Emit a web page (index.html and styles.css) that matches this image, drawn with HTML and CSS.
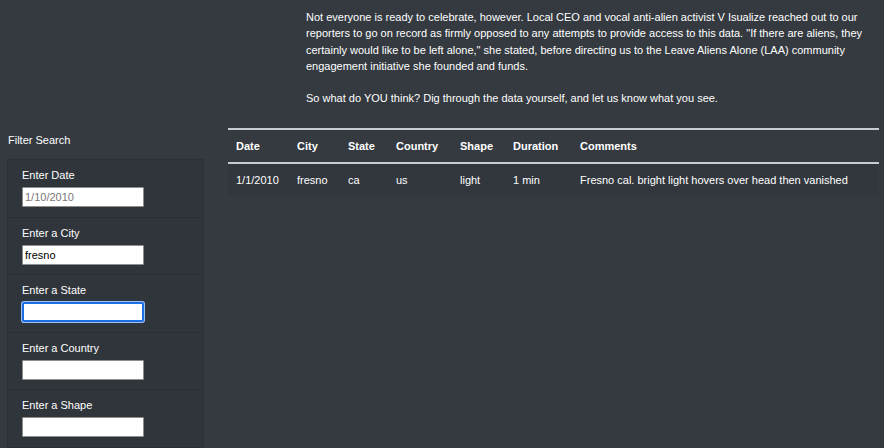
FILE: index.html
```html
<!DOCTYPE html>
<html>
<head>
<meta charset="utf-8">
<link rel="stylesheet" href="styles.css">
</head>
<body>
<div class="intro">
  <p>Not everyone is ready to celebrate, however. Local CEO and vocal anti-alien activist V Isualize reached out to our reporters to go on record as firmly opposed to any attempts to provide access to this data. "If there are aliens, they certainly would like to be left alone," she stated, before directing us to the Leave Aliens Alone (LAA) community engagement initiative she founded and funds.</p>
  <p>So what do YOU think? Dig through the data yourself, and let us know what you see.</p>
</div>
<div class="main">
  <aside class="filters">
    <div class="filter-title">Filter Search</div>
    <ul class="filter-list">
      <li><label>Enter Date</label><input class="inp" type="text" placeholder="1/10/2010"></li>
      <li><label>Enter a City</label><input class="inp" type="text" value="fresno"></li>
      <li><label>Enter a State</label><input class="inp focus" type="text"></li>
      <li><label>Enter a Country</label><input class="inp" type="text"></li>
      <li><label>Enter a Shape</label><input class="inp" type="text"></li>
    </ul>
  </aside>
  <section class="results">
    <table class="ufo">
      <thead>
        <tr><th class="c-date">Date</th><th class="c-city">City</th><th class="c-state">State</th><th class="c-country">Country</th><th class="c-shape">Shape</th><th class="c-dur">Duration</th><th>Comments</th></tr>
      </thead>
      <tbody>
        <tr><td>1/1/2010</td><td>fresno</td><td>ca</td><td>us</td><td>light</td><td>1 min</td><td>Fresno cal. bright light hovers over head then vanished</td></tr>
      </tbody>
    </table>
  </section>
</div>
</body>
</html>
```
FILE: styles.css
```css
* { box-sizing: border-box; }
html, body { margin: 0; padding: 0; }
body {
  width: 884px;
  height: 448px;
  overflow: hidden;
  background: #343a40;
  color: #fff;
  font-family: "Liberation Sans", Arial, sans-serif;
  font-size: 11px;
}
.intro {
  padding: 9px 8px 0 306px;
}
.intro p {
  margin: 0 0 16px 0;
  line-height: 16.25px;
}
.main {
  display: flex;
  margin-top: 1px;
}
.filters {
  width: 213px;
  padding-left: 7px;
  padding-top: 10px;
}
.filter-title {
  padding-left: 1px;
  height: 27px;
  line-height: 16px;
}
.filter-list {
  list-style: none;
  margin: 0;
  padding: 0;
  width: 197px;
  border: 1px solid #2c3136;
  border-bottom: none;
  border-radius: 2px 2px 0 0;
}
.filter-list li {
  background: #30353b;
  border-bottom: 1px solid #2a2f34;
  height: 57.5px;
  padding: 7px 14px 0 14px;
}
.filter-list label {
  display: block;
  line-height: 16px;
  margin-bottom: 4px;
}
.inp {
  display: block;
  width: 122px;
  height: 20px;
  border: 1px solid #8e8e8e;
  border-radius: 1px;
  background: #fff;
  color: #000;
  font-family: "Liberation Sans", Arial, sans-serif;
  font-size: 11px;
  padding: 1px 2px;
  margin: 0;
  outline: none;
}
.inp::placeholder { color: #777; }
.inp.focus {
  border: 2px solid #1b6fe0;
  border-radius: 2px;
  box-shadow: 0 0 0 1px #9ec2f5;
}
.results {
  flex: 1;
  padding-left: 15px;
  padding-right: 5px;
  padding-top: 6px;
}
.ufo {
  width: 100%;
  border-collapse: collapse;
  color: #fff;
  font-size: 11px;
}
.ufo th {
  text-align: left;
  font-weight: bold;
  border-top: 2px solid #c8ccd0;
  border-bottom: 2px solid #c8ccd0;
  height: 34px;
  padding: 0 8px;
}
.ufo td {
  height: 32px;
  padding: 0 8px;
  background: #32373d;
}
.c-date { width: 61px; }
.c-city { width: 51px; }
.c-state { width: 48px; }
.c-country { width: 64px; }
.c-shape { width: 53px; }
.c-dur { width: 67px; }
```
